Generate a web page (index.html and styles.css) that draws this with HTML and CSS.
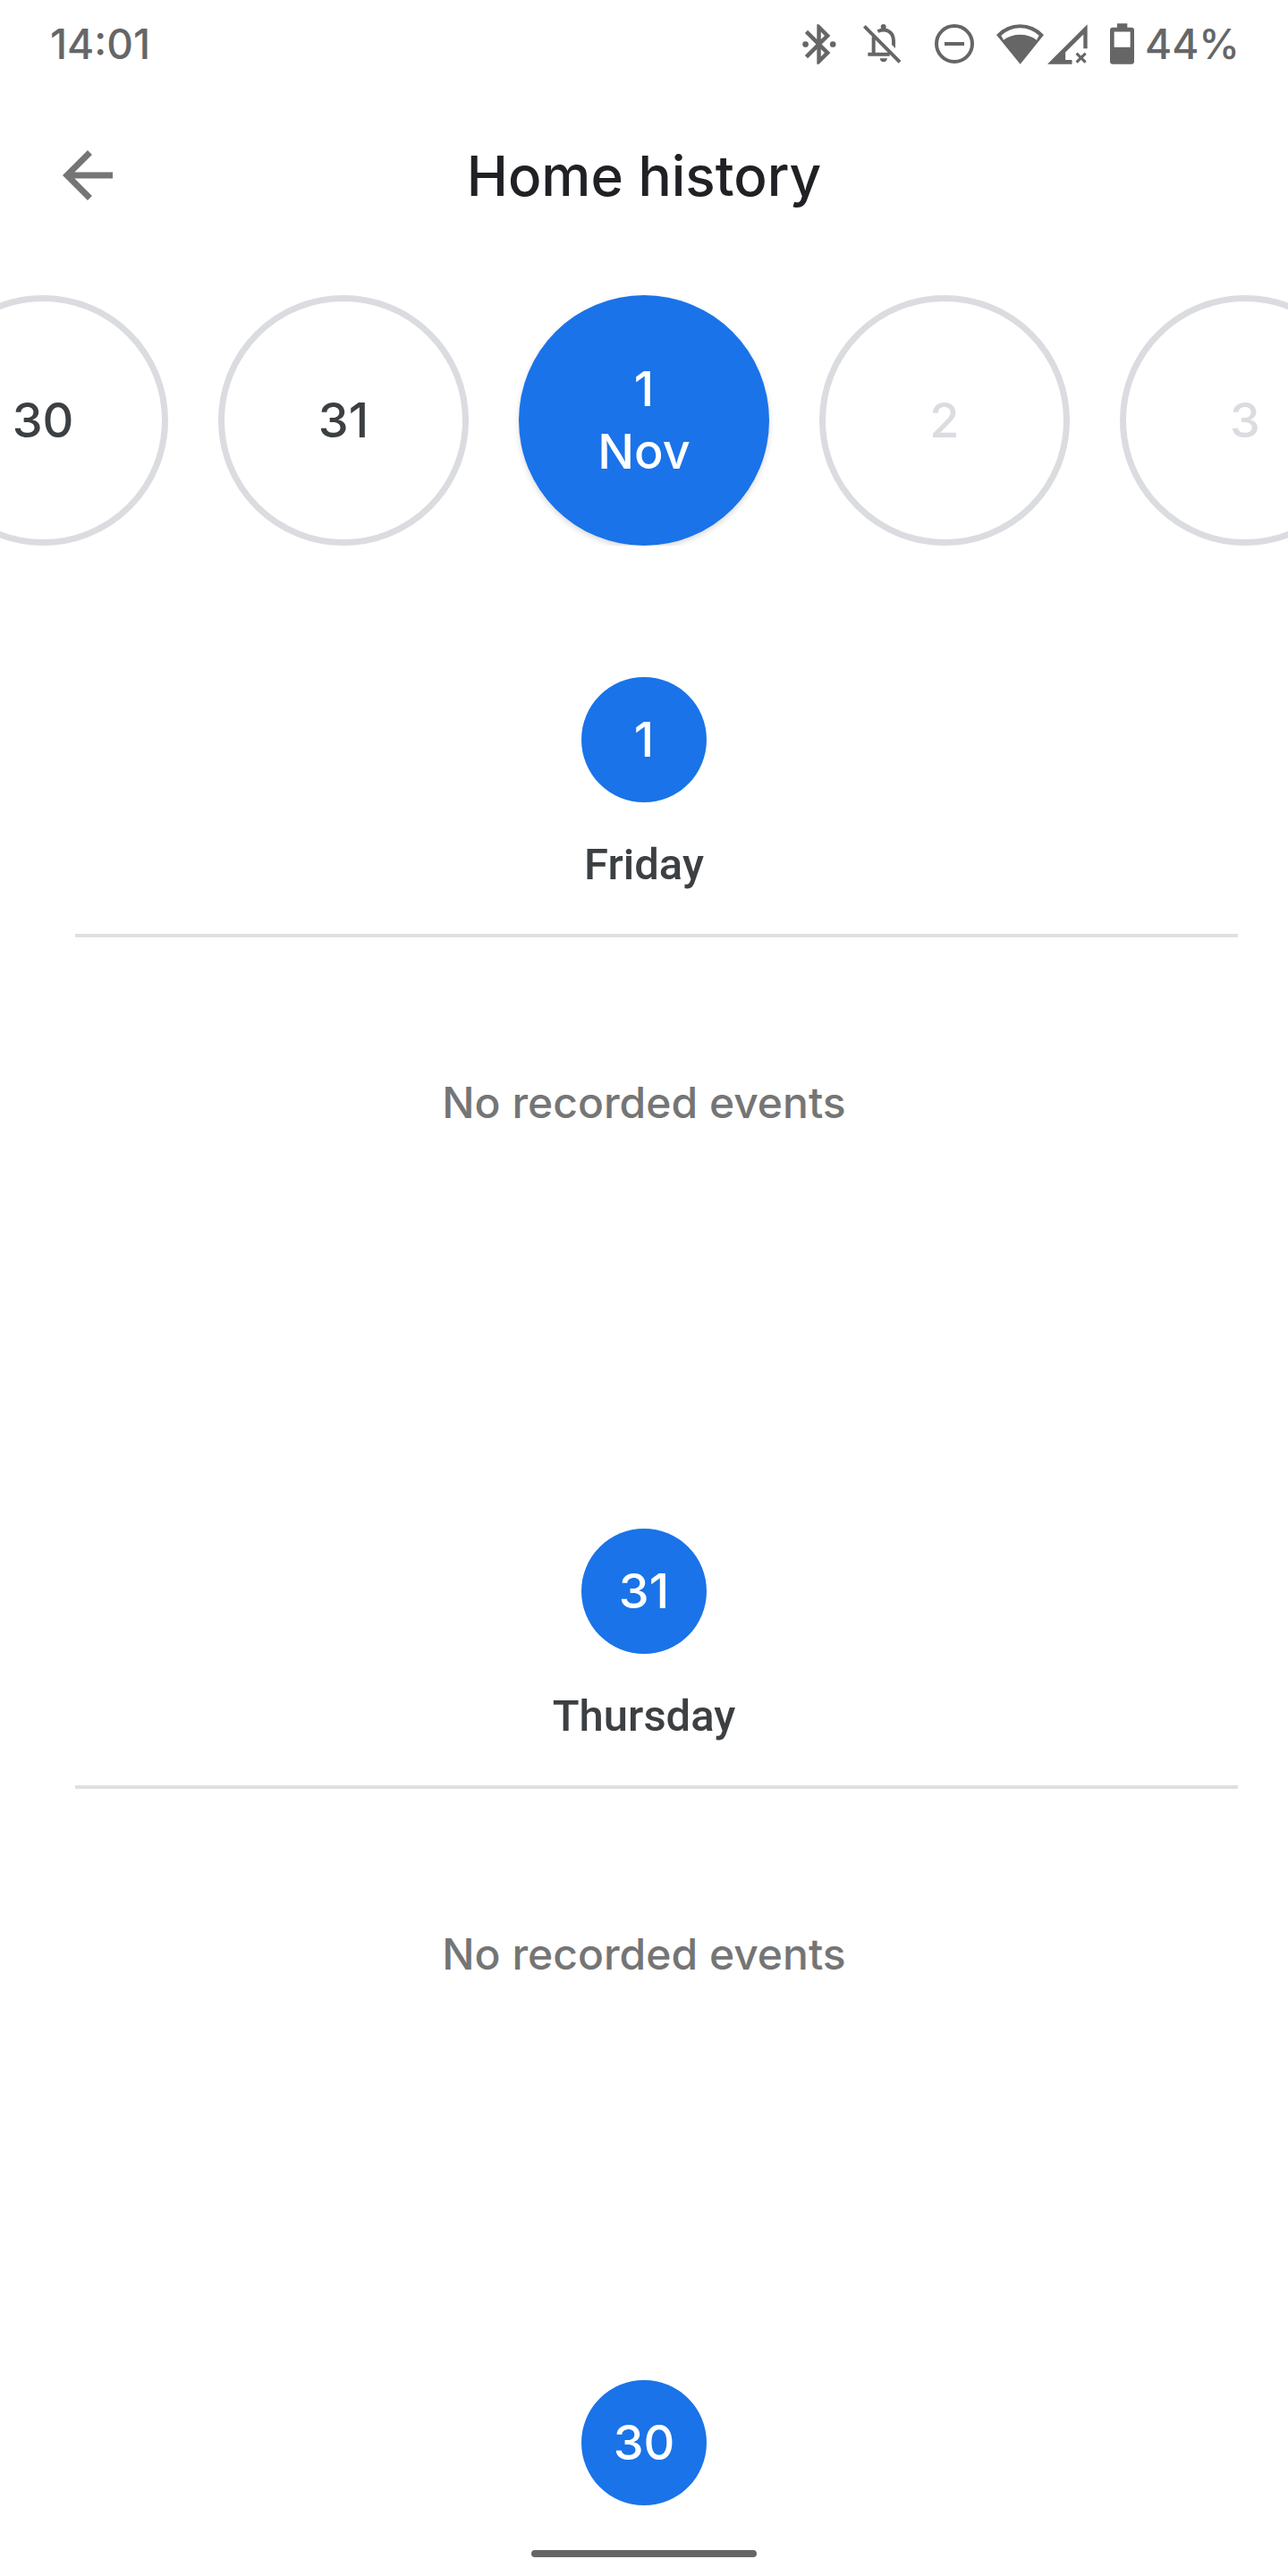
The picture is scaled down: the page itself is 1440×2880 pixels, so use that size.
FILE: index.html
```html
<!doctype html>
<html lang="en">
<head>
    <meta charset="UTF-8">
    <meta name="viewport" content="width=device-width, initial-scale=1">
    <title>Home history</title>
    <link rel="stylesheet" href="styles.css">
</head>
<body>
<div class="statusbar">
    <span class="time">14:01</span>
    <div class="status-right">
        <div class="notices">
            <!-- bluetooth connected -->
            <svg width="38" height="45" viewBox="3.7 2 17 20">
                <path d="M17.71 7.71L12 2h-1v7.59L6.41 5 5 6.41 10.59 12 5 17.59 6.41 19 11 14.41V22h1l5.71-5.71-4.3-4.29zM13 5.83l1.88 1.88L13 9.59zM14.88 16.29L13 18.17v-3.76z"/>
                <circle cx="5.3" cy="12" r="1.5"/>
                <circle cx="19" cy="12" r="1.5"/>
            </svg>
            <!-- ringer off -->
            <svg width="50" height="44" viewBox="287 83 150 132">
                <circle cx="355" cy="92" r="9"/>
                <path d="M343 198h25q-2 12-12.500 12t-12.500-12zM383 136h12v28l-12-12z"/>
                <path class="line" d="M291 90L410 210M322 126V184M303 184H376M336 107Q362 96 378 111Q389 121 389 140"/>
            </svg>
            <!-- do not disturb -->
            <svg width="44" height="44" viewBox="528 80 132 132">
                <circle class="line" cx="594" cy="146" r="60"/>
                <path class="line" d="M561 146H627"/>
            </svg>
        </div>
        <div class="network">
            <svg width="53" height="45" viewBox="45 78 159 135">
                <path fill-rule="evenodd" d="M125 212L45 114A107 107 0 0 1 204 114ZM61 116L69 131A95 95 0 0 1 180 131L188 116A93 93 0 0 0 61 116Z"/>
            </svg>
            <svg width="45" height="45" viewBox="217 79 134 134">
                <path d="M217 212L350 80V160H337V113L277 173V198H299V212Z"/>
                <path class="cross" d="M314 176L344 206M344 176L314 206"/>
            </svg>
        </div>
        <div class="battery">
            <svg width="27" height="46" viewBox="426 78 81 137">
                <path fill-rule="evenodd" d="M450 78H484V92H498Q507 92 507 101V206Q507 215 498 215H435Q426 215 426 206V101Q426 92 435 92H450ZM440 106V158H494V106Z"/>
            </svg>
            <span>44%</span>
        </div>
    </div>
</div>

<div class="appbar">
    <button class="back" type="button" aria-label="Back">
        <svg width="84" height="84" viewBox="0 0 24 24">
            <path d="M20 11H7.830l5.590-5.590L12 4l-8 8 8 8 1.410-1.410L7.830 13H20v-2z"/>
        </svg>
    </button>
    <h1>Home history</h1>
</div>

<div class="dates">
    <button type="button">30</button>
    <button type="button">31</button>
    <button class="cur" type="button" aria-pressed="true">1<br>Nov</button>
    <button type="button" disabled>2</button>
    <button type="button" disabled>3</button>
</div>

<div class="days">
    <div class="item">
        <div class="num">1</div>
        <h2>Friday</h2>
        <p class="empty">No recorded events</p>
    </div>
    <div class="item">
        <div class="num">31</div>
        <h2>Thursday</h2>
        <p class="empty">No recorded events</p>
    </div>
    <div class="item">
        <div class="num">30</div>
    </div>
</div>

<div class="gesture"><span></span></div>
</body>
</html>
```

FILE: styles.css
```css
*{
    margin: 0;
    padding: 0;
    box-sizing: border-box;
}
body{
    display: flex;
    flex-direction: column;
    min-height: 100vh;
    overflow-x: hidden;
    background: #fff;
    color: #3c4043;
    font-family: Inter, "Liberation Sans", sans-serif;
    font-weight: 500;
}
button{
    border: none;
    background: none;
    font: inherit;
    color: inherit;
    cursor: pointer;
}
svg{
    display: block;
    fill: currentColor;
}

/* status bar */
.statusbar{
    display: flex;
    justify-content: space-between;
    align-items: center;
    height: 98px;
    padding: 0 54px 0 56px;
    color: #666;
    font-size: 46px;
}
.status-right,
.notices,
.network,
.battery{
    display: flex;
    align-items: center;
}
.status-right{
    gap: 25px;
}
.notices{
    gap: 30px;
}
.network{
    gap: 4px;
}
.battery{
    gap: 12px;
}
.line,
.cross{
    fill: none;
    stroke: currentColor;
    stroke-width: 12;
}
.cross{
    stroke-width: 9;
}

/* title row */
.appbar{
    display: grid;
    grid-template-columns: 84px 1fr 84px;
    align-items: center;
    height: 196px;
    padding: 0 56px;
}
.back{
    color: #757575;
}
.appbar h1{
    color: #202124;
    font-size: 62px;
    font-weight: 500;
    text-align: center;
}

/* date picker */
.dates{
    display: flex;
    flex: none;
    justify-content: center;
    gap: 56px;
    margin-top: 36px;
    overflow: hidden;
}
.dates button{
    flex: none;
    width: 280px;
    height: 280px;
    border: 7px solid #dadce0;
    border-radius: 50%;
    font-size: 54px;
    line-height: 70px;
}
.dates button:disabled{
    color: #dadce0;
    cursor: default;
}
.dates .cur{
    border: none;
    background: #1a73e8;
    color: #fff;
    box-shadow: 0 3px 6px rgba(0, 0, 0, 0.15);
}

/* day list */
.days{
    padding-top: 147px;
    text-align: center;
}
.item .num{
    width: 140px;
    margin: 0 auto;
    border-radius: 50%;
    background: #1a73e8;
    color: #fff;
    font-size: 54px;
    line-height: 140px;
}
.item h2{
    margin: 0 56px 0 84px;
    padding: 42px 28px 49px 0;
    border-bottom: 4px solid #e0e0e0;
    font-family: Roboto, sans-serif;
    font-size: 49px;
    font-weight: 500;
    line-height: 56px;
}
.item .empty{
    padding: 157px 0 448px;
    color: #757575;
    font-size: 48px;
    line-height: 56px;
}

.gesture{
    margin-top: auto;
    padding-bottom: 21px;
}
.gesture span{
    display: block;
    width: 252px;
    height: 8px;
    margin: 0 auto;
    border-radius: 4px;
    background: #666;
}
```
